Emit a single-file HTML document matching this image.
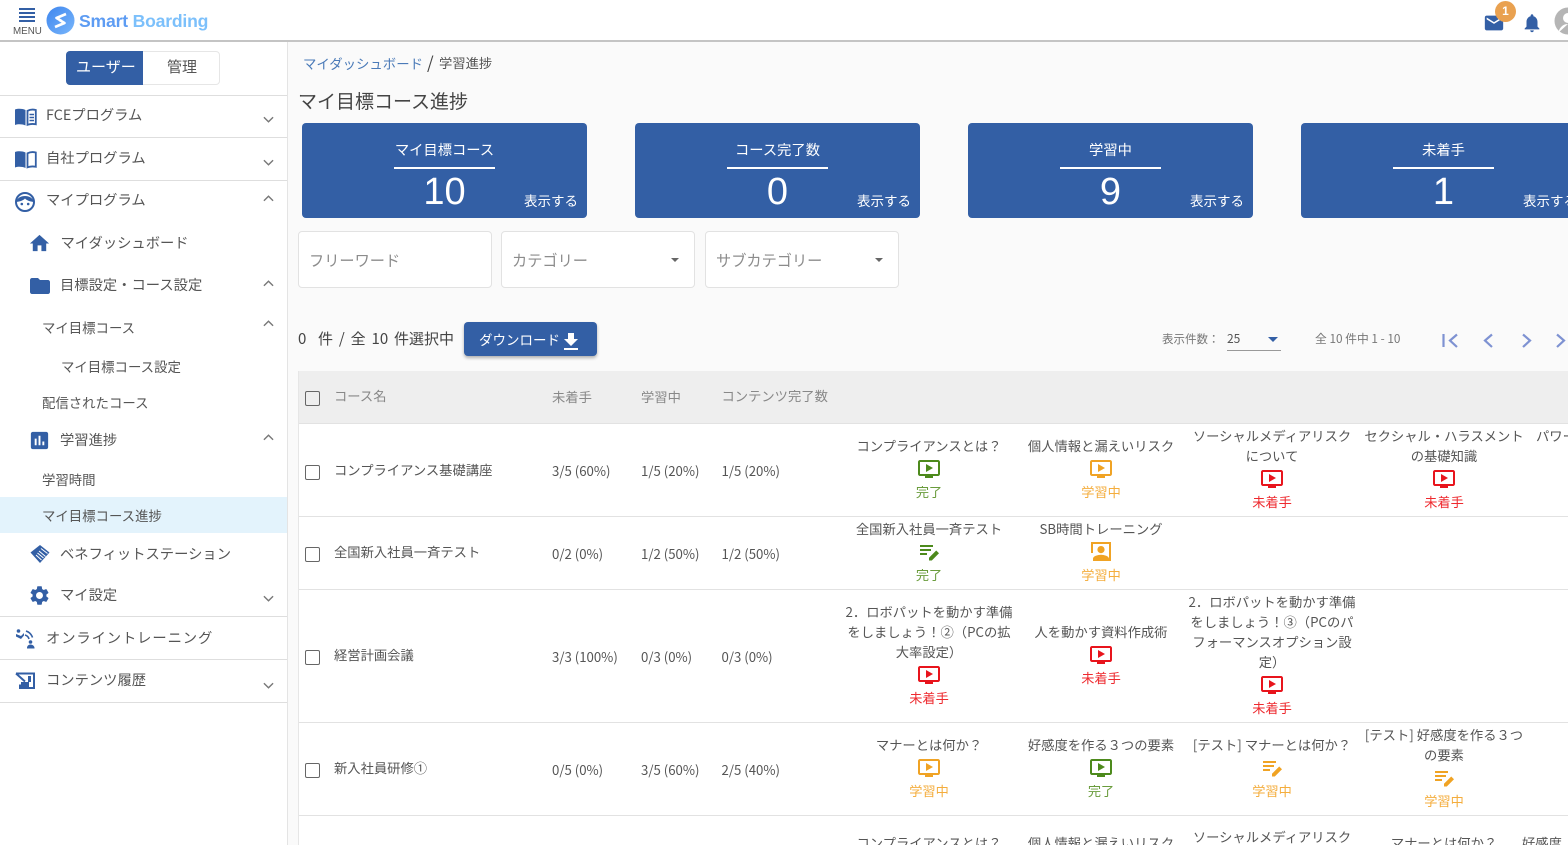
<!DOCTYPE html>
<html lang="ja"><head><meta charset="utf-8"><title>マイ目標コース進捗</title>
<style>
*{box-sizing:border-box}
html,body{margin:0;padding:0;width:1568px;height:845px;overflow:hidden;background:#fafafa}
body{position:relative;font-family:"Liberation Sans","Noto Sans CJK JP",sans-serif;color:#555;font-size:13.4px}
.t{position:absolute;white-space:nowrap;line-height:20px;font-family:"Noto Sans CJK JP",sans-serif}
.b{position:absolute}
svg{position:absolute;overflow:visible}
#hd{position:absolute;left:0;top:0;width:1568px;height:42px;background:#fff;border-bottom:2px solid #c4c4c4;z-index:3}
#sb{position:absolute;left:0;top:42px;width:288px;height:803px;background:#fff;border-right:1px solid #e4e4e4}
.hr{position:absolute;left:0;width:287px;height:1px;background:#dedede}
.s1{font-size:14.3px;color:#555;margin-top:1px}
.s2{font-size:13.4px;color:#555}
.card{position:absolute;top:123px;width:285px;height:95px;background:#335fa5;border-radius:4px;color:#fff}
.card .l{position:absolute;left:92px;width:101px;top:17px;height:29px;line-height:20px;text-align:center;border-bottom:2px solid #fff;font-size:14.3px;white-space:nowrap;font-family:"Noto Sans CJK JP",sans-serif}
.card .n{position:absolute;left:92px;width:101px;top:47px;line-height:44px;text-align:center;font-size:38px;font-family:"Liberation Sans",sans-serif}
.card .s{position:absolute;left:222px;top:67px;line-height:20px;font-size:13.5px;white-space:nowrap;font-family:"Noto Sans CJK JP",sans-serif}
.inp{position:absolute;top:231px;width:194px;height:57px;background:#fff;border:1px solid #e2e2e2;border-radius:4px}
.inp span{position:absolute;left:10px;top:17px;line-height:22px;font-size:15.2px;color:#8c8c8c;font-family:"Noto Sans CJK JP",sans-serif}
.inp i{position:absolute;left:169px;top:26px;width:0;height:0;border:4.500px solid transparent;border-top-color:#666;border-bottom:0}
.row{position:absolute;left:298px;width:1270px;background:#fff;border-bottom:1px solid #e2e2e2}
.cb{position:absolute;left:305px;width:15px;height:15px;border:1.6px solid #666;border-radius:2px}
.nm{font-size:13.3px;color:#555;left:334px}
.num{font-size:13.2px;color:#555}
.c{position:absolute;width:172px;text-align:center;line-height:20px;font-size:13.300px;color:#555;font-family:"Noto Sans CJK JP",sans-serif}
.c svg{position:relative;display:block;width:24px;height:24px;margin:1px auto 1px}
.c b{display:block;font-weight:400;font-size:13.2px}
.g svg{fill:#4d8a1c}.o svg{fill:#f0a324}.r svg{fill:#e8141c}
.g b{color:#6a9c3c}.o b{color:#f4ad3d}.r b{color:#ee2a2f}
.ch{fill:none;stroke:#777;stroke-width:1.5}
</style></head><body>
<svg width="0" height="0" style="position:absolute"><defs>
<symbol id="v" viewBox="0 0 24 24"><path d="M21 3H3c-1.11 0-2 .89-2 2v12c0 1.100.89 2 2 2h5v2h8v-2h5c1.100 0 1.990-.9 1.990-2L23 5c0-1.110-.9-2-2-2zm0 14H3V5h18v12zm-5-6l-7 4V7z"/></symbol>
<symbol id="e" viewBox="0 0 24 24"><path d="M3 5h13v2H3zM3 9h11v2H3zM3 13h7v2H3zM12 20.500v-2.800l7.200-7.200 2.800 2.800-7.200 7.200z"/></symbol>
<symbol id="p" viewBox="0 0 24 24"><path d="M2 2h20v19h-2V4H4v9H2zM12 6a3.600 3.600 0 1 1 0 7.200A3.600 3.600 0 0 1 12 6zM4 21v-2.500c0-2.400 5-3.800 8-3.800s8 1.400 8 3.800V21z"/></symbol>
</defs></svg>

<div id="hd">
<div class="b" style="left:19px;top:8px;width:16px;height:2px;background:#335fa5"></div>
<div class="b" style="left:19px;top:12px;width:16px;height:2px;background:#335fa5"></div>
<div class="b" style="left:19px;top:16px;width:16px;height:2px;background:#335fa5"></div>
<div class="b" style="left:19px;top:20px;width:16px;height:2px;background:#335fa5"></div>
<div class="t" style="left:13px;top:22px;font-size:9.800px;color:#555;font-family:'Liberation Sans',sans-serif">MENU</div>
<svg style="left:46px;top:6px" width="29" height="29" viewBox="0 0 29 29"><defs><linearGradient id="lg" x1="0" y1="0" x2="1" y2="1"><stop offset="0" stop-color="#3f86ee"/><stop offset="1" stop-color="#78b6fb"/></linearGradient></defs><circle cx="14.500" cy="14.500" r="14" fill="url(#lg)"/><path d="M20 8l-9.500 4 5 3M9 21l9.500-4-5-3" fill="none" stroke="#fff" stroke-width="2.600" stroke-linejoin="round"/></svg>
<div class="t" style="left:79px;top:11px;font-size:17.600px;font-weight:700;letter-spacing:-.2px;font-family:'Liberation Sans',sans-serif;color:#5d9cf3">Smart <span style="color:#7cc0fb">Boarding</span></div>
<svg style="left:1483px;top:12px" width="22" height="22" viewBox="0 0 24 24" fill="#335fa5"><path d="M20 4H4c-1.100 0-1.990.9-1.990 2L2 18c0 1.100.9 2 2 2h16c1.100 0 2-.9 2-2V6c0-1.100-.9-2-2-2zm0 4l-8 5-8-5V6l8 5 8-5v2z"/></svg>
<div class="b" style="left:1495px;top:1px;width:21px;height:21px;border-radius:50%;background:#e9a150;color:#fff;font-size:12px;font-weight:700;line-height:21px;text-align:center">1</div>
<svg style="left:1521px;top:12px" width="22" height="22" viewBox="0 0 24 24" fill="#335fa5"><path d="M12 22c1.100 0 2-.9 2-2h-4c0 1.100.89 2 2 2zm6-6v-5c0-3.070-1.640-5.640-4.500-6.320V4c0-.83-.67-1.500-1.500-1.500s-1.500.67-1.500 1.500v.68C7.630 5.360 6 7.920 6 11v5l-2 2v1h16v-1l-2-2z"/></svg>
<svg style="left:1554px;top:7px" width="28" height="28" viewBox="0 0 28 28"><circle cx="14" cy="14" r="13.500" fill="#b5b5b5"/><circle cx="14" cy="11" r="5" fill="#fff"/><path d="M4 26c2-7 6-9 10-9" fill="#fff"/></svg>
</div>

<div id="sb"></div>
<div class="b" style="left:66px;top:51px;width:154px;height:34px;background:#fff;border:1px solid #e6e6e6;border-radius:4px"></div>
<div class="b" style="left:66px;top:51px;width:77px;height:34px;background:#335fa5;border-radius:4px 0 0 4px"></div>
<div class="t" style="left:76px;top:58px;font-size:15px;color:#fff;margin-top:-1px">ユーザー</div>
<div class="t" style="left:167px;top:57px;font-size:15px;color:#555">管理</div>
<div class="hr" style="top:95px"></div><div class="hr" style="top:137px"></div><div class="hr" style="top:180px"></div><div class="hr" style="top:616px"></div><div class="hr" style="top:659px"></div><div class="hr" style="top:702px"></div>
<div class="b" style="left:0;top:497px;width:287px;height:36px;background:#e3f3fc"></div>

<svg style="left:15px;top:108px" width="22" height="18" viewBox="0 0 22 18"><path d="M0 1.500C3 .5 7 .5 10.500 2v15.500C7 16 3 16 0 17z" fill="#335fa5"/><path d="M12.500 2.800C15 1.500 18 1.300 20.800 2V16.300c-3-.6-5.800-.4-8.300.5z" fill="#fff" stroke="#335fa5" stroke-width="1.800"/><path d="M14.500 6.500h4.500M14.500 9.500h4.500M14.500 12.500h4.500" stroke="#335fa5" stroke-width="1.500"/></svg>
<div class="t s1" style="left:46px;top:104px">FCEプログラム</div>
<svg style="left:263px;top:116px" width="11" height="7" viewBox="0 0 12 7"><path d="M1 1l5 5 5-5" class="ch"/></svg>

<svg style="left:15px;top:151px" width="22" height="17" viewBox="0 0 22 17"><path d="M0 1C3 0 7 0 10.500 1.500V17C7 15.500 3 15.500 0 16.500z" fill="#335fa5"/><path d="M12.500 2.300C15 1 18 .8 20.800 1.500v14.300c-3-.6-5.800-.4-8.300.5z" fill="#fff" stroke="#335fa5" stroke-width="1.800"/></svg>
<div class="t s1" style="left:46px;top:147px">自社プログラム</div>
<svg style="left:263px;top:159px" width="11" height="7" viewBox="0 0 12 7"><path d="M1 1l5 5 5-5" class="ch"/></svg>

<svg style="left:15px;top:192px" width="20" height="20" viewBox="0 0 20 20"><circle cx="10" cy="10" r="9" fill="#fff" stroke="#335fa5" stroke-width="2"/><path d="M1.500 10C2 2 18 2 18.500 10 15 9.500 12 8.500 10 6.500 8 8.500 5 9.500 1.500 10z" fill="#335fa5"/><circle cx="6.800" cy="12" r="1.300" fill="#335fa5"/><circle cx="13.200" cy="12" r="1.300" fill="#335fa5"/></svg>
<div class="t s1" style="left:46px;top:189px">マイプログラム</div>
<svg style="left:263px;top:195px" width="11" height="7" viewBox="0 0 12 7"><path d="M1 6l5-5 5 5" class="ch"/></svg>

<svg style="left:28px;top:232px" width="23" height="23" viewBox="0 0 24 24" fill="#335fa5"><path d="M10 20v-6h4v6h5v-8h3L12 3 2 12h3v8z"/></svg>
<div class="t s1" style="left:60.500px;top:232px">マイダッシュボード</div>

<svg style="left:28px;top:274px" width="24" height="24" viewBox="0 0 24 24" fill="#335fa5"><path d="M10 4H4c-1.100 0-2 .9-2 2v12c0 1.100.9 2 2 2h16c1.100 0 2-.9 2-2V8c0-1.100-.9-2-2-2h-8l-2-2z"/></svg>
<div class="t s1" style="left:60px;top:274px">目標設定・コース設定</div>
<svg style="left:263px;top:280px" width="11" height="7" viewBox="0 0 12 7"><path d="M1 6l5-5 5 5" class="ch"/></svg>

<div class="t s2" style="left:42px;top:317px">マイ目標コース</div>
<svg style="left:263px;top:320px" width="11" height="7" viewBox="0 0 12 7"><path d="M1 6l5-5 5 5" class="ch"/></svg>
<div class="t s2" style="left:61px;top:356px">マイ目標コース設定</div>
<div class="t s2" style="left:42px;top:392px">配信されたコース</div>

<svg style="left:28px;top:429px" width="23" height="23" viewBox="0 0 24 24" fill="#335fa5"><path d="M19 3H5c-1.100 0-2 .9-2 2v14c0 1.100.9 2 2 2h14c1.100 0 2-.9 2-2V5c0-1.100-.9-2-2-2zM9 17H7v-7h2v7zm4 0h-2V7h2v10zm4 0h-2v-4h2v4z"/></svg>
<div class="t s1" style="left:60px;top:429px">学習進捗</div>
<svg style="left:263px;top:434px" width="11" height="7" viewBox="0 0 12 7"><path d="M1 6l5-5 5 5" class="ch"/></svg>
<div class="t s2" style="left:42px;top:469px">学習時間</div>
<div class="t s2" style="left:42px;top:505px">マイ目標コース進捗</div>

<svg style="left:30px;top:545px" width="20" height="18" viewBox="0 0 20 18"><path d="M10 0l9.500 7.500L10 18 .5 7.500z" fill="#335fa5"/><path d="M9 6l6.500 5.500M7.500 8l6 5M6 10l5.500 5M11 3.500l6.500 5" stroke="#fff" stroke-width="1" fill="none"/></svg>
<div class="t s1" style="left:60px;top:543px">ベネフィットステーション</div>

<svg style="left:28px;top:584px" width="23" height="23" viewBox="0 0 24 24" fill="#335fa5"><path d="M19.140 12.940c.04-.3.060-.61.060-.94 0-.32-.02-.64-.07-.94l2.030-1.580c.18-.14.23-.41.12-.61l-1.920-3.320c-.12-.22-.37-.29-.59-.22l-2.390.96c-.5-.38-1.030-.7-1.620-.94l-.36-2.540c-.04-.24-.24-.41-.48-.41h-3.840c-.24 0-.43.170-.47.41l-.36 2.540c-.59.24-1.130.57-1.620.94l-2.390-.96c-.22-.08-.47 0-.59.22L2.740 8.870c-.12.21-.08.47.12.61l2.030 1.580c-.05.3-.09.63-.09.94s.02.64.07.94l-2.030 1.580c-.18.14-.23.41-.12.61l1.920 3.320c.12.22.37.29.59.22l2.390-.96c.5.38 1.030.7 1.620.94l.36 2.540c.05.24.24.41.48.41h3.840c.24 0 .44-.17.47-.41l.36-2.540c.59-.24 1.130-.56 1.620-.94l2.390.96c.22.08.47 0 .59-.22l1.920-3.320c.12-.22.07-.47-.12-.61l-2.010-1.580zM12 15.600c-1.980 0-3.600-1.620-3.600-3.600s1.620-3.600 3.600-3.600 3.600 1.620 3.600 3.600-1.620 3.600-3.600 3.600z"/></svg>
<div class="t s1" style="left:60px;top:584px">マイ設定</div>
<svg style="left:263px;top:595px" width="11" height="7" viewBox="0 0 12 7"><path d="M1 1l5 5 5-5" class="ch"/></svg>

<svg style="left:15px;top:628px" width="21" height="21" viewBox="0 0 21 21"><circle cx="3.500" cy="3" r="1.800" fill="#335fa5"/><path d="M1 6l5 2 3-3v2.500L6 11 1 8.500z" fill="#335fa5"/><path d="M11 3c3 1 5.500 3.500 6.500 6.500M10 7c2 .6 3.500 2 4 4" stroke="#335fa5" stroke-width="1.600" fill="none"/><circle cx="15.500" cy="14" r="1.800" fill="#335fa5"/><path d="M12 20c0-2 1.500-3.500 3.500-3.500S19.500 18 19.500 20v.5H12z" fill="#335fa5"/></svg>
<div class="t s1" style="left:46px;top:627px;letter-spacing:.9px">オンライントレーニング</div>

<svg style="left:15px;top:672px" width="20" height="17" viewBox="0 0 20 17"><path d="M1 1.500h18V16H5v-3.500" fill="none" stroke="#335fa5" stroke-width="2"/><path d="M1 1.500l9 8" stroke="#335fa5" stroke-width="2"/><path d="M6 10h8v6H6z" fill="#335fa5"/><path d="M13 4h3v6h-3z" fill="#335fa5"/></svg>
<div class="t s1" style="left:46px;top:669px">コンテンツ履歴</div>
<svg style="left:263px;top:682px" width="11" height="7" viewBox="0 0 12 7"><path d="M1 1l5 5 5-5" class="ch"/></svg>

<!-- main -->
<div class="t" style="left:303px;top:53px;font-size:13.400px;color:#4a7ab8">マイダッシュボード</div>
<div class="t" style="left:427px;top:52px;font-size:17px;color:#444">/</div>
<div class="t" style="left:439px;top:53px;font-size:13.300px;color:#555">学習進捗</div>
<div class="t" style="left:298px;top:91px;font-size:19px;color:#444">マイ目標コース進捗</div>

<div class="card" style="left:302px"><div class="l">マイ目標コース</div><div class="n">10</div><div class="s">表示する</div></div>
<div class="card" style="left:635px"><div class="l">コース完了数</div><div class="n">0</div><div class="s">表示する</div></div>
<div class="card" style="left:968px"><div class="l">学習中</div><div class="n">9</div><div class="s">表示する</div></div>
<div class="card" style="left:1301px"><div class="l">未着手</div><div class="n">1</div><div class="s">表示する</div></div>

<div class="inp" style="left:298px"><span>フリーワード</span></div>
<div class="inp" style="left:501px"><span>カテゴリー</span><i></i></div>
<div class="inp" style="left:705px"><span>サブカテゴリー</span><i></i></div>

<div class="t" style="left:298px;top:329px;font-size:15px;color:#444;word-spacing:2.500px">0&nbsp; 件 / 全 10 件選択中</div>
<div class="b" style="left:464px;top:322px;width:133px;height:34px;background:#335fa5;border-radius:4px;box-shadow:0 2px 3px rgba(0,0,0,.3)"></div>
<div class="t" style="left:479px;top:329px;font-size:13.500px;color:#fff">ダウンロード</div>
<svg style="left:559px;top:330px" width="24" height="24" viewBox="0 0 24 24" fill="#fff"><path d="M19 9h-4V3H9v6H5l7 7 7-7zM5 18v2h14v-2H5z"/></svg>

<div class="t" style="left:1162px;top:329px;font-size:11.500px;color:#777">表示件数：</div>
<div class="t" style="left:1227px;top:329px;font-size:12px;color:#555">25</div>
<div class="b" style="left:1268px;top:337px;width:0;height:0;border:5px solid transparent;border-top-color:#335fa5;border-bottom:0"></div>
<div class="b" style="left:1227px;top:350px;width:54px;height:1px;background:#999"></div>
<div class="t" style="left:1315px;top:329px;font-size:11.800px;color:#777">全 10 件中 1 - 10</div>
<svg style="left:1440px;top:331px" width="125" height="18" viewBox="0 0 125 18" fill="none" stroke="#7e92d2" stroke-width="2.200"><path d="M3.500 3v13M17 3.500l-7 6 7 6.500"/><path d="M52 3.500l-7 6 7 6.500"/><path d="M83 3.500l7 6-7 6.500"/><path d="M117 3.500l7 6-7 6.500"/></svg>

<div class="row" style="top:371px;height:53px;background:#eee;border-bottom:1px solid #e2e2e2"></div>
<div class="row" style="top:424px;height:93px"></div>
<div class="row" style="top:517px;height:73px"></div>
<div class="row" style="top:590px;height:133px"></div>
<div class="row" style="top:723px;height:93px"></div>
<div class="row" style="top:816px;height:40px;border-bottom:0"></div>
<div class="b" style="left:298px;top:371px;width:1px;height:474px;background:#e6e6e6"></div>

<div class="cb" style="top:391px"></div>
<div class="t" style="left:334px;top:386px;font-size:13.300px;color:#888">コース名</div>
<div class="t" style="left:552px;top:387px;font-size:13.300px;color:#888">未着手</div>
<div class="t" style="left:641px;top:387px;font-size:13.300px;color:#888">学習中</div>
<div class="t" style="left:721.500px;top:386px;font-size:13.300px;color:#888">コンテンツ完了数</div>

<div class="cb" style="top:465px"></div><div class="t nm" style="top:460px">コンプライアンス基礎講座</div>
<div class="t num" style="left:552px;top:461px">3/5 (60%)</div><div class="t num" style="left:641px;top:461px">1/5 (20%)</div><div class="t num" style="left:721.500px;top:461px">1/5 (20%)</div>
<div class="cb" style="top:547px"></div><div class="t nm" style="top:542px">全国新入社員一斉テスト</div>
<div class="t num" style="left:552px;top:544px">0/2 (0%)</div><div class="t num" style="left:641px;top:544px">1/2 (50%)</div><div class="t num" style="left:721.500px;top:544px">1/2 (50%)</div>
<div class="cb" style="top:650px"></div><div class="t nm" style="top:645px">経営計画会議</div>
<div class="t num" style="left:552px;top:647px">3/3 (100%)</div><div class="t num" style="left:641px;top:647px">0/3 (0%)</div><div class="t num" style="left:721.500px;top:647px">0/3 (0%)</div>
<div class="cb" style="top:763px"></div><div class="t nm" style="top:758px">新入社員研修①</div>
<div class="t num" style="left:552px;top:760px">0/5 (0%)</div><div class="t num" style="left:641px;top:760px">3/5 (60%)</div><div class="t num" style="left:721.500px;top:760px">2/5 (40%)</div>

<div class="c g" style="left:843px;top:436px">コンプライアンスとは？<svg><use href="#v"/></svg><b>完了</b></div>
<div class="c o" style="left:1015px;top:436px;white-space:nowrap">個人情報と漏えいリスク<svg><use href="#v"/></svg><b>学習中</b></div>
<div class="c r" style="left:1186px;top:426px;white-space:nowrap">ソーシャルメディアリスク<br>について<svg><use href="#v"/></svg><b>未着手</b></div>
<div class="c r" style="left:1358px;top:426px;white-space:nowrap">セクシャル・ハラスメント<br>の基礎知識<svg><use href="#v"/></svg><b>未着手</b></div>
<div class="t" style="left:1536px;top:426px;font-size:13.300px;color:#555">パワー</div>

<div class="c g" style="left:843px;top:519px;white-space:nowrap">全国新入社員一斉テスト<svg><use href="#e"/></svg><b>完了</b></div>
<div class="c o" style="left:1015px;top:519px">SB時間トレーニング<svg><use href="#p"/></svg><b>学習中</b></div>

<div class="c r" style="left:843px;top:602px;white-space:nowrap">2．ロボパットを動かす準備<br>をしましょう！②（PCの拡<br>大率設定）<svg><use href="#v"/></svg><b>未着手</b></div>
<div class="c r" style="left:1015px;top:622px">人を動かす資料作成術<svg><use href="#v"/></svg><b>未着手</b></div>
<div class="c r" style="left:1186px;top:592px;white-space:nowrap">2．ロボパットを動かす準備<br>をしましょう！③（PCのパ<br>フォーマンスオプション設<br>定）<svg><use href="#v"/></svg><b>未着手</b></div>

<div class="c o" style="left:843px;top:735px">マナーとは何か？<svg><use href="#v"/></svg><b>学習中</b></div>
<div class="c g" style="left:1015px;top:735px;white-space:nowrap">好感度を作る３つの要素<svg><use href="#v"/></svg><b>完了</b></div>
<div class="c o" style="left:1186px;top:735px;white-space:nowrap">[テスト] マナーとは何か？<svg><use href="#e"/></svg><b>学習中</b></div>
<div class="c o" style="left:1358px;top:725px;white-space:nowrap">[テスト] 好感度を作る３つ<br>の要素<svg><use href="#e"/></svg><b>学習中</b></div>

<div class="c" style="left:843px;top:833px;white-space:nowrap">コンプライアンスとは？</div>
<div class="c" style="left:1015px;top:833px;white-space:nowrap">個人情報と漏えいリスク</div>
<div class="c" style="left:1186px;top:827px;white-space:nowrap">ソーシャルメディアリスク</div>
<div class="c" style="left:1358px;top:833px">マナーとは何か？</div>
<div class="t" style="left:1522px;top:833px;font-size:13.300px;color:#555">好感度</div>
</body></html>
